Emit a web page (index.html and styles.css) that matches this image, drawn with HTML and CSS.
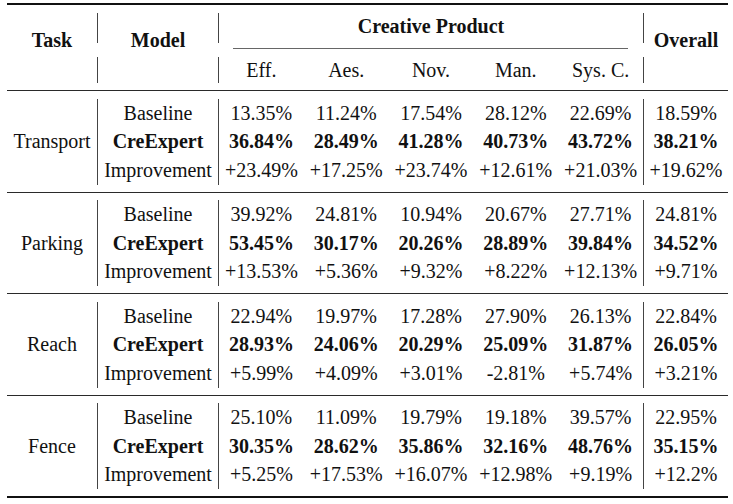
FILE: index.html
```html
<!DOCTYPE html>
<html>
<head>
<meta charset="utf-8">
<link rel="stylesheet" href="styles.css">
</head>
<body>
<div class="tbl">
  <div class="rule-thick"></div>
  <div class="hdr">
    <div class="hlabel">Task</div>
    <div class="sep-cell">
      <div class="vsep"><span class="seg s1"></span><span class="seg s2"></span></div>
      <div class="hlabel">Model</div>
    </div>
    <div class="sep-cell">
      <div class="vsep"><span class="seg s1"></span><span class="seg s2"></span></div>
      <div class="cp">
        <div class="cp-title">Creative Product</div>
        <div class="cmid"></div>
        <div class="cp-cols"><span>Eff.</span><span>Aes.</span><span>Nov.</span><span>Man.</span><span>Sys. C.</span></div>
      </div>
    </div>
    <div class="sep-cell">
      <div class="vsep"><span class="seg s1"></span><span class="seg s2"></span></div>
      <div class="hlabel">Overall</div>
    </div>
  </div>
  <div class="rule"></div>

  <div class="grp">
    <div class="task">Transport</div>
    <div class="cell models"><div>Baseline</div><div class="b">CreExpert</div><div>Improvement</div></div>
    <div class="cell vals">
      <span>13.35%</span><span>11.24%</span><span>17.54%</span><span>28.12%</span><span>22.69%</span>
      <span class="b">36.84%</span><span class="b">28.49%</span><span class="b">41.28%</span><span class="b">40.73%</span><span class="b">43.72%</span>
      <span>+23.49%</span><span>+17.25%</span><span>+23.74%</span><span>+12.61%</span><span>+21.03%</span>
    </div>
    <div class="cell overall"><div>18.59%</div><div class="b">38.21%</div><div>+19.62%</div></div>
  </div>
  <div class="rule"></div>

  <div class="grp">
    <div class="task">Parking</div>
    <div class="cell models"><div>Baseline</div><div class="b">CreExpert</div><div>Improvement</div></div>
    <div class="cell vals">
      <span>39.92%</span><span>24.81%</span><span>10.94%</span><span>20.67%</span><span>27.71%</span>
      <span class="b">53.45%</span><span class="b">30.17%</span><span class="b">20.26%</span><span class="b">28.89%</span><span class="b">39.84%</span>
      <span>+13.53%</span><span>+5.36%</span><span>+9.32%</span><span>+8.22%</span><span>+12.13%</span>
    </div>
    <div class="cell overall"><div>24.81%</div><div class="b">34.52%</div><div>+9.71%</div></div>
  </div>
  <div class="rule"></div>

  <div class="grp">
    <div class="task">Reach</div>
    <div class="cell models"><div>Baseline</div><div class="b">CreExpert</div><div>Improvement</div></div>
    <div class="cell vals">
      <span>22.94%</span><span>19.97%</span><span>17.28%</span><span>27.90%</span><span>26.13%</span>
      <span class="b">28.93%</span><span class="b">24.06%</span><span class="b">20.29%</span><span class="b">25.09%</span><span class="b">31.87%</span>
      <span>+5.99%</span><span>+4.09%</span><span>+3.01%</span><span>-2.81%</span><span>+5.74%</span>
    </div>
    <div class="cell overall"><div>22.84%</div><div class="b">26.05%</div><div>+3.21%</div></div>
  </div>
  <div class="rule"></div>

  <div class="grp">
    <div class="task">Fence</div>
    <div class="cell models"><div>Baseline</div><div class="b">CreExpert</div><div>Improvement</div></div>
    <div class="cell vals">
      <span>25.10%</span><span>11.09%</span><span>19.79%</span><span>19.18%</span><span>39.57%</span>
      <span class="b">30.35%</span><span class="b">28.62%</span><span class="b">35.86%</span><span class="b">32.16%</span><span class="b">48.76%</span>
      <span>+5.25%</span><span>+17.53%</span><span>+16.07%</span><span>+12.98%</span><span>+9.19%</span>
    </div>
    <div class="cell overall"><div>22.95%</div><div class="b">35.15%</div><div>+12.2%</div></div>
  </div>
  <div class="rule-thick"></div>
</div>
</body>
</html>
```

FILE: styles.css
```css
html, body {
  margin: 0;
  padding: 0;
  background: #ffffff;
}

.tbl {
  font-family: "Liberation Serif", "Times New Roman", serif;
  width: 721px;
  margin: 3px 0 0 7px;
  font-size: 20px;
  color: #111;
}

.rule-thick {
  height: 2px;
  background: #111;
}

.rule {
  height: 0;
  border-top: 1px solid #2a2a2a;
}

.hdr {
  display: grid;
  grid-template-columns: 90px 121px 425px 85px;
  height: 85px;
}

.sep-cell {
  display: flex;
}

.vsep {
  flex: none;
  width: 1px;
  display: flex;
  flex-direction: column;
  padding-top: 8px;
  gap: 14px;
}

.seg {
  display: block;
  background: #444;
  width: 1px;
}

.s1 { height: 30px; }
.s2 { height: 26px; }

.hlabel {
  flex: 1;
  text-align: center;
  font-weight: bold;
  line-height: 24px;
  padding-top: 23px;
}

.cp {
  flex: 1;
  display: flex;
  flex-direction: column;
}

.cp-title {
  text-align: center;
  font-weight: bold;
  line-height: 24px;
  padding-top: 9px;
}

.cmid {
  height: 0;
  border-top: 1px solid #666;
  margin: 10px 15px 0 14px;
}

.cp-cols {
  display: grid;
  grid-template-columns: repeat(5, 1fr);
  line-height: 24px;
  padding-top: 9px;
  text-align: center;
}

.grp {
  display: grid;
  grid-template-columns: 90px 121px 425px 85px;
  padding: 7.5px 0 7px;
  line-height: 28.667px;
}

.task {
  align-self: center;
  text-align: center;
}

.cell {
  border-left: 1px solid #444;
  text-align: center;
}

.vals {
  display: grid;
  grid-template-columns: repeat(5, 1fr);
}

.b {
  font-weight: bold;
}
```
